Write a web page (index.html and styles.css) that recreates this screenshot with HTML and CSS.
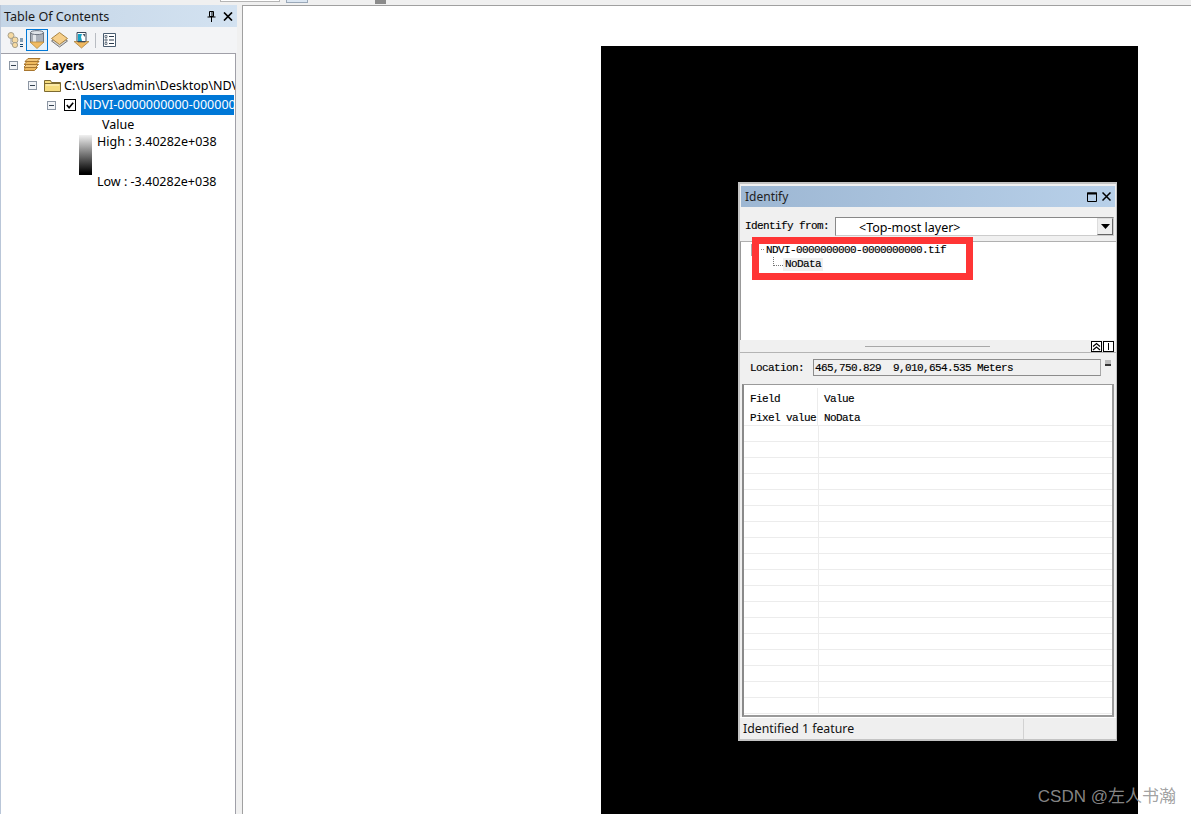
FILE: index.html
```html
<!DOCTYPE html>
<html lang="en">
<head>
<meta charset="utf-8">
<title>ArcMap Identify</title>
<link rel="stylesheet" href="styles.css">
</head>
<body>
<div class="app">
  <div class="topbar">
    <span class="top-field"></span>
    <span class="top-btn"></span>
    <span class="top-knob"></span>
  </div>
  <div class="main">
    <aside class="toc">
      <div class="toc-title">
        <span class="toc-title-text">Table Of Contents</span>
        <svg class="pin" width="9" height="11" viewBox="0 0 9 11"><path d="M2.5 .5h4v5h-4zM5 1v4M.5 6h8M4.5 6v5" fill="none" stroke="#000"/></svg>
        <svg class="close" width="10" height="9" viewBox="0 0 10 9"><path d="M1 .5l8 8M9 .5l-8 8" fill="none" stroke="#000" stroke-width="1.7"/></svg>
      </div>
      <div class="toc-tools">
        <span class="tool">
          <svg width="17" height="16" viewBox="0 0 17 16"><path d="M4 4v8h5" fill="none" stroke="#9a9a9a"/><circle cx="4" cy="3.500" r="3" fill="#f6d9a0" stroke="#a8a08a"/><circle cx="8" cy="8" r="3" fill="#f6d9a0" stroke="#a8a08a"/><circle cx="8" cy="13" r="2.600" fill="#f6d9a0" stroke="#a8a08a"/><path d="M13 7h3M13 9h3M13 12.500h3M13 14.500h3" stroke="#14456e" stroke-width="1.200"/></svg>
        </span>
        <span class="tool tool-on">
          <svg width="16" height="20" viewBox="0 0 16 20"><path d="M1.500 2.500v10h13v-10z" fill="#a9afb8"/><path d="M1.500 2.500v10" stroke="#6f7681"/><path d="M14.500 2.500v10" stroke="#6f7681"/><path d="M4 4v8h3V4z" fill="#e3e6ea"/><ellipse cx="8" cy="2.600" rx="6.500" ry="2" fill="#dfe3e8" stroke="#6d7480"/><path d="M1 12h14L8 18.500z" fill="#f0bb63" stroke="#b58a3e" stroke-width=".8"/></svg>
        </span>
        <span class="tool tool-layers">
          <svg width="17" height="16" viewBox="0 0 17 16"><path d="M.5 9l8-5 8 5-8 6z" fill="#cfcfcf" stroke="#7b7b7b"/><path d="M.5 6.500l8-6 8 6-8 6z" fill="#f6cf8a" stroke="#a98443"/></svg>
        </span>
        <span class="tool tool-source">
          <svg width="17" height="17" viewBox="0 0 17 17"><path d="M4 .5h9v9H4z" fill="#fff" stroke="#39485a"/><path d="M5 2h4l-1 3 1 4H5z" fill="#17a2c6"/><path d="M9.500 2H12v3z" fill="#4a5866"/><path d="M1 9.500h3l1 1h7l1-1h3l-7.500 6.500z" fill="#f0b85f" stroke="#a98443" stroke-width=".8"/></svg>
        </span>
        <span class="tool-sep"></span>
        <span class="tool tool-options">
          <svg width="14" height="14" viewBox="0 0 14 14"><path d="M.5.500h12v13H.5z" fill="#fff" stroke="#4a5d70"/><path d="M6 3.500h5M6 7h5M6 10.500h5" stroke="#2a3b4d"/><path d="M2 2.500h2v2H2zM2 6h2v2H2zM2 9.500h2v2H2z" fill="#fff" stroke="#506070" stroke-width=".8"/></svg>
        </span>
      </div>
      <div class="toc-tree">
        <div class="row row-root">
          <span class="expander"></span>
          <svg class="row-icon" width="17" height="14" viewBox="0 0 17 14"><path d="M4 .5h12l-3 3H1z" fill="#f2c67a" stroke="#a8762f"/><path d="M3 3.500h12l-3 3H0z" fill="#eeb95f" stroke="#a8762f"/><path d="M2.500 6.500h12l-3 3H-.5z" fill="#f2c67a" stroke="#a8762f"/><path d="M1.500 9.500h12l-3 3H-.5z" fill="#eeb95f" stroke="#a8762f"/></svg>
          <span class="row-bold">Layers</span>
        </div>
        <div class="row row-folder">
          <span class="expander"></span>
          <svg class="row-icon" width="17" height="13" viewBox="0 0 17 13"><path d="M.5 12.500V1.500h6l1 2h9v9z" fill="#f5dc7e" stroke="#7d6a30"/><path d="M.5 4.500h16" stroke="#7d6a30"/><path d="M2 6h13" stroke="#fff6cc"/></svg>
          <span class="row-text">C:\Users\admin\Desktop\NDVI\NDVI-0000000000-0000000000.tif</span>
        </div>
        <div class="row row-layer">
          <span class="expander"></span>
          <span class="check">
            <svg width="11" height="11" viewBox="0 0 11 11"><path d="M2 5l2.500 3L9 2.500" fill="none" stroke="#000" stroke-width="1.800"/></svg>
          </span>
          <span class="row-selected">NDVI-0000000000-0000000000.tif</span>
        </div>
        <div class="legend-head">Value</div>
        <div class="legend">
          <span class="ramp"></span>
          <div class="legend-labels">
            <span>High : 3.40282e+038</span>
            <span>Low : -3.40282e+038</span>
          </div>
        </div>
      </div>
    </aside>

    <section class="canvas">
      <div class="raster"></div>
    </section>
  </div>
</div>

<div class="identify">
  <div class="id-title">
    <span class="id-title-text">Identify</span>
    <svg class="id-max" width="10" height="10" viewBox="0 0 10 10"><path d="M.5 1h9v8.500h-9z" fill="none" stroke="#000"/><path d="M0 1.500h10" stroke="#000" stroke-width="2"/></svg>
    <svg class="id-close" width="9" height="9" viewBox="0 0 9 9"><path d="M.5.500l8 8M8.500.500l-8 8" fill="none" stroke="#000" stroke-width="1.500"/></svg>
  </div>
  <div class="id-from">
    <span class="mono from-label">Identify from:</span>
    <div class="combo">
      <span class="combo-text">&lt;Top-most layer&gt;</span>
      <span class="combo-btn"><svg width="9" height="5" viewBox="0 0 9 5"><path d="M0 0h9L4.500 5z" fill="#000"/></svg></span>
    </div>
  </div>
  <div class="id-tree mono">
    <div class="id-node">
      <span class="id-exp"></span>
      <span class="id-dots"></span>
      <span>NDVI-0000000000-0000000000.tif</span>
    </div>
    <div class="id-child">
      <span class="id-elbow"></span>
      <span class="id-leaf">NoData</span>
    </div>
  </div>
  <div class="id-split">
    <span class="split-line"></span>
    <span class="split-btn"><svg width="9" height="9" viewBox="0 0 9 9"><path d="M1 4.500l3.500-3 3.500 3M1 8l3.500-3 3.500 3" fill="none" stroke="#000" stroke-width="1.200"/></svg></span>
    <span class="split-btn"><svg width="9" height="9" viewBox="0 0 9 9"><path d="M4.500 1v7" stroke="#000"/></svg></span>
  </div>
  <div class="id-loc mono">
    <span class="loc-label">Location:</span>
    <span class="loc-field">465,750.829  9,010,654.535 Meters</span>
    <span class="loc-btn"></span>
  </div>
  <div class="id-table mono">
    <div class="t-head"><span class="t-field">Field</span><span class="t-value">Value</span></div>
    <div class="t-row t-first"><span class="t-field">Pixel value</span><span class="t-value">NoData</span></div>
    <div class="t-row"></div><div class="t-row"></div><div class="t-row"></div>
    <div class="t-row"></div><div class="t-row"></div><div class="t-row"></div>
    <div class="t-row"></div><div class="t-row"></div><div class="t-row"></div>
    <div class="t-row"></div><div class="t-row"></div><div class="t-row"></div>
    <div class="t-row"></div><div class="t-row"></div><div class="t-row"></div>
    <div class="t-row"></div><div class="t-row"></div><div class="t-row"></div>
  </div>
  <div class="id-status">
    <span class="status-main">Identified 1 feature</span>
    <span class="status-side"></span>
  </div>
</div>

<div class="annotation"></div>
<div class="watermark">CSDN @左人书瀚</div>
</body>
</html>
```
FILE: styles.css
```css
* { box-sizing: border-box; }
html, body { margin: 0; height: 100%; overflow: hidden; }
body {
  position: relative;
  background: #f0f0f0;
  color: #000;
  font-family: "Noto Sans", "Liberation Sans", sans-serif;
  font-size: 12.5px;
}
.app { display: flex; flex-direction: column; height: 814px; }

.topbar { display: flex; height: 5px; flex: none; position: relative; overflow: hidden; background: #f0f0f0; }
.top-field { width: 60px; height: 2px; margin-left: 220px; background: #fff; border: 1px solid #b5b5b5; border-top: 0; }
.top-btn { width: 22px; height: 3px; margin-left: 6px; background: #dbe6f2; border: 1px solid #9aa8b8; border-top: 0; }
.top-knob { width: 11px; height: 4px; margin-left: 67px; background: #8b8b8b; }

.main { display: flex; flex: 1; min-height: 0; }

.toc { display: flex; flex-direction: column; width: 237px; flex: none; border-left: 1px solid #b9c6d8; }
.toc-title { display: flex; align-items: center; height: 22px; flex: none; padding-left: 3px; background: linear-gradient(90deg, #c4d5e6, #d3e2f1); }
.toc-title-text { flex: 1; font-size: 12.6px; color: #1a1a1a; }
.pin { margin-right: 7px; }
.close { margin-right: 4px; }

.toc-tools { display: flex; align-items: center; height: 26px; flex: none; padding-left: 6px; background: #f3f4f6; }
.tool { display: flex; align-items: center; justify-content: center; flex: none; }
.tool-on { width: 22px; height: 22px; margin-left: 2px; background: #e5f1fb; border: 1px solid #0078d7; }
.tool-layers { margin-left: 3px; }
.tool-source { margin-left: 5px; }
.tool-sep { width: 1px; height: 15px; margin: 0 7px 0 5px; background: #b8bcc2; }

.toc-tree { flex: 1; width: 235px; padding-top: 1px; overflow: hidden; background: #fff; border-top: 1px solid #a0a0a8; border-right: 1px solid #a0a0a8; }
.row { display: flex; align-items: center; height: 20px; white-space: nowrap; overflow: hidden; }
.row-root { padding-left: 8px; }
.row-folder { padding-left: 27px; }
.row-layer { padding-left: 46px; padding-right: 1px; }
.expander { position: relative; width: 9px; height: 9px; flex: none; background: #f2f4f7; border: 1px solid #8c96a3; }
.expander::after { content: ""; position: absolute; left: 1px; right: 1px; top: 3px; height: 1px; background: #33414f; }
.row-icon { flex: none; }
.row-root .row-icon { margin-left: 6px; margin-right: 4px; }
.row-folder .row-icon { margin-left: 7px; margin-right: 3px; }
.row-bold { font-size: 12px; font-weight: 700; }
.row-text { font-size: 12.5px; }
.check { display: flex; align-items: center; justify-content: center; width: 12px; height: 12px; flex: none; margin-left: 8px; background: #fff; border: 1px solid #000; }
.row-selected { flex: 1; min-width: 0; height: 20px; margin-left: 5px; padding-left: 2px; overflow: hidden; line-height: 20px; color: #fff; background: #0078d7; }
.legend-head { height: 18px; padding-left: 101px; line-height: 20px; }
.legend { display: flex; padding: 2px 0 0 78px; height: 58px; }
.ramp { width: 13px; height: 40px; flex: none; background: linear-gradient(#f0f0f0, #000 95%); }
.legend-labels { display: flex; flex-direction: column; justify-content: space-between; margin-left: 5px; height: 54px; line-height: 14px; }

.canvas { flex: 1; margin-left: 5px; padding: 40px 0 0 358px; display: flex; background: #fff; border-top: 1px solid #a0a0a0; border-left: 1px solid #a0a0a0; }
.raster { width: 537px; background: #000; }

.identify { position: absolute; left: 738px; top: 182px; width: 379px; height: 559px; display: flex; flex-direction: column; background: #f0f0f0; border: 2px solid #c4c4c4; border-right-width: 1px; }
.mono { font-family: "Liberation Mono", "DejaVu Sans Mono", monospace; font-size: 11px; letter-spacing: -.6px; -webkit-text-stroke: .15px #000; }
.id-title { display: flex; align-items: center; height: 21px; flex: none; margin: 2px 1px 0 1px; padding-left: 4px; background: linear-gradient(90deg, #9db7d3, #b8d0e9); }
.id-title-text { flex: 1; font-size: 12px; color: #222; }
.id-max { margin-right: 5px; }
.id-close { margin-right: 4px; }
.id-from { display: flex; align-items: center; gap: 6px; height: 34px; flex: none; padding: 5px 2px 0 5px; }
.from-label { margin-top: -2px; }
.combo { display: flex; align-items: center; flex: 1; height: 19px; padding-left: 23px; background: #fff; border: 1px solid #888; border-right-color: #ccc; border-bottom-color: #ccc; }
.combo-text { flex: 1; padding-top: 2px; font-size: 12.5px; }
.combo-btn { display: flex; align-items: center; justify-content: center; width: 16px; height: 17px; background: #efefef; border: 1px solid #666; border-top-color: #ddd; border-left-color: #ddd; }

.id-tree { height: 99px; flex: none; padding: 0 0 0 10px; background: #fff; border-top: 1px solid #b0b0b0; border-left: 1px solid #999; }
.id-node { display: flex; align-items: center; height: 13px; margin-top: 1px; }
.id-exp { width: 7px; height: 12px; flex: none; border: 1px solid #aaa; }
.id-dots { width: 3px; height: 1px; margin: 0 2px 0 3px; flex: none; border-top: 1px dotted #888; }
.id-child { display: flex; align-items: flex-start; height: 14px; margin-top: 1px; padding-left: 22px; }
.id-elbow { width: 10px; height: 9px; flex: none; border-left: 1px dotted #777; border-bottom: 1px dotted #777; }
.id-leaf { height: 13px; margin-top: 1px; padding: 0 2px; line-height: 13px; background: #f0f0f0; }

.id-split { display: flex; align-items: center; height: 12px; flex: none; padding-left: 125px; padding-right: 1px; }
.split-line { width: 125px; height: 1px; margin-right: 101px; background: #a8a8a8; }
.split-btn { display: flex; align-items: center; justify-content: center; width: 11px; height: 11px; margin-right: 1px; background: #fff; border: 1px solid #000; }

.id-loc { display: flex; align-items: center; height: 32px; flex: none; padding: 0 0 2px 10px; border-top: 1px solid #b4b4b4; }
.loc-label { width: 63px; flex: none; }
.loc-field { width: 288px; height: 17px; flex: none; padding-left: 1px; line-height: 17px; white-space: pre; border: 1px solid #8c8c8c; border-right-color: #a8a8a8; }
.loc-btn { width: 6px; height: 6px; margin: -10px 0 0 4px; flex: none; background: #bdbdbd; border-bottom: 2px solid #333; }

.id-table { margin: 0 2px; height: 333px; flex: none; padding-top: 3px; overflow: hidden; background: #fff; border: 2px solid #9a9a9a; border-top-width: 1px; border-left-color: #8a8a8a; }
.t-head { display: flex; align-items: center; height: 23px; }
.t-row { display: flex; align-items: center; height: 16px; border-bottom: 1px solid #ececec; }
.t-first { height: 15px; }
.t-field { width: 74px; height: 100%; flex: none; padding-left: 6px; border-right: 1px solid #ececec; line-height: 15px; white-space: nowrap; }
.t-head .t-field, .t-head .t-value { line-height: 23px; }
.t-row:not(.t-first)::before { content: ""; width: 74px; height: 100%; border-right: 1px solid #ececec; }
.t-value { padding-left: 6px; line-height: 15px; }

.id-status { display: flex; align-items: center; flex: 1; padding: 0 2px 0 3px; background: #efefef; border-top: 1px solid #fff; }
.status-main { flex: 1; font-size: 12.3px; color: #111; }
.status-side { width: 91px; height: 20px; border-left: 1px solid #d2d2d2; }

.annotation { position: absolute; left: 752px; top: 237px; width: 221px; height: 43px; border: 7px solid #ff3535; }
.watermark { position: absolute; right: 15px; top: 782px; font-family: "Liberation Sans", "Noto Sans CJK SC", sans-serif; font-size: 17px; color: rgba(150,150,150,.9); white-space: nowrap; }
```
